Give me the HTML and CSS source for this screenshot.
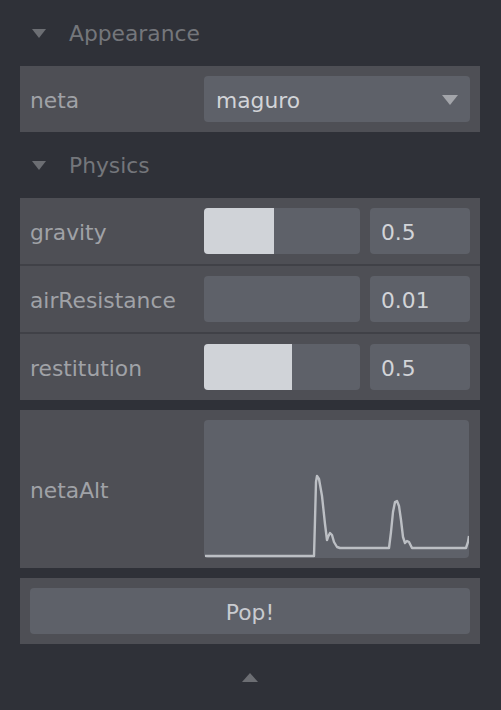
FILE: index.html
```html
<!DOCTYPE html>
<html>
<head>
<meta charset="utf-8">
<link rel="stylesheet" href="styles.css">
</head>
<body>
<div class="pane">
  <div class="folder-title"><span class="tri-down"></span><span>Appearance</span></div>
  <div class="group">
    <div class="row">
      <div class="label">neta</div>
      <div class="value">
        <div class="select"><span>maguro</span><span class="caret"></span></div>
      </div>
    </div>
  </div>

  <div class="folder-title"><span class="tri-down"></span><span>Physics</span></div>
  <div class="group">
    <div class="row">
      <div class="label">gravity</div>
      <div class="value slider-row">
        <div class="slider"><div class="fill" style="width:45%"></div></div>
        <div class="number">0.5</div>
      </div>
    </div>
    <div class="sep"></div>
    <div class="row">
      <div class="label">airResistance</div>
      <div class="value slider-row">
        <div class="slider"><div class="fill" style="width:0%"></div></div>
        <div class="number">0.01</div>
      </div>
    </div>
    <div class="sep"></div>
    <div class="row">
      <div class="label">restitution</div>
      <div class="value slider-row">
        <div class="slider"><div class="fill" style="width:56.5%"></div></div>
        <div class="number">0.5</div>
      </div>
    </div>
  </div>

  <div class="group spaced">
    <div class="row graph-row">
      <div class="label">netaAlt</div>
      <div class="value">
        <div class="graph">
          <svg width="265" height="138" viewBox="0 0 265 138">
            <polyline fill="none" stroke="#bcbfc4" stroke-width="2.4" stroke-linejoin="round"
              points="1,136 110,136 111,100 112,62 113,56 115,59 118,76 121,104 123,120 124,117 126,113 128,115 130,122 133,127 136,128 185,128 187,112 189,92 191,82 193,81 195,86 197,100 199,117 201,123 203,121 205,122 208,128 262,128 264,122 265,116"/>
          </svg>
        </div>
      </div>
    </div>
  </div>

  <div class="group spaced">
    <div class="row">
      <div class="button">Pop!</div>
    </div>
  </div>

  <div class="footer"><span class="tri-up"></span></div>
</div>
</body>
</html>
```

FILE: styles.css
```css
html, body {
  margin: 0;
  padding: 0;
  background: #2f3138;
}
body {
  font-family: "DejaVu Sans", "Liberation Sans", sans-serif;
  font-size: 21.8px;
  width: 501px;
  height: 710px;
  overflow: hidden;
}
.pane {
  width: 460px;
  margin-left: 20px;
  display: flex;
  flex-direction: column;
}
.folder-title {
  height: 66px;
  display: flex;
  align-items: center;
  color: #74767b;
  padding-top: 1px;
  box-sizing: border-box;
}
.tri-down {
  width: 0;
  height: 0;
  border-left: 7.5px solid transparent;
  border-right: 7.5px solid transparent;
  border-top: 9px solid #6c6e73;
  margin-left: 12px;
  margin-right: 23px;
}
.group {
  background: #4e4f55;
  display: flex;
  flex-direction: column;
}
.group.spaced {
  margin-top: 10px;
}
.row {
  display: flex;
  align-items: center;
  padding: 10px;
  height: 46px;
}
.label {
  width: 174px;
  color: #a0a2a7;
  line-height: 46px;
  padding-top: 3px;
  box-sizing: border-box;
}
.value {
  width: 266px;
  display: flex;
}
.select {
  width: 266px;
  height: 46px;
  background: #5e6169;
  border-radius: 4px;
  display: flex;
  align-items: center;
  justify-content: space-between;
  padding: 3px 12px 0 12px;
  box-sizing: border-box;
  color: #d2d4d8;
}
.caret {
  width: 0;
  height: 0;
  border-left: 8px solid transparent;
  border-right: 8px solid transparent;
  border-top: 10px solid #a3a5aa;
  margin-top: -2px;
}
.sep {
  height: 2px;
  background: #404147;
}
.slider-row {
  gap: 10px;
}
.slider {
  width: 156px;
  height: 46px;
  background: #5e6169;
  border-radius: 4px;
  overflow: hidden;
}
.fill {
  height: 100%;
  background: #d0d3d8;
}
.number {
  width: 100px;
  height: 46px;
  background: #5e6169;
  border-radius: 4px;
  color: #d2d4d8;
  padding: 3px 0 0 11px;
  box-sizing: border-box;
  display: flex;
  align-items: center;
}
.graph-row {
  height: 138px;
}
.graph {
  width: 265px;
  height: 138px;
  background: #5e6169;
  border-radius: 4px;
  overflow: hidden;
}
.graph svg {
  display: block;
}
.button {
  width: 440px;
  height: 46px;
  background: #5e6169;
  border-radius: 4px;
  color: #c9cbd0;
  display: flex;
  align-items: center;
  justify-content: center;
  padding-top: 2px;
  box-sizing: border-box;
}
.footer {
  display: flex;
  justify-content: center;
  padding-top: 29px;
  padding-right: 1px;
}
.tri-up {
  width: 0;
  height: 0;
  border-left: 8px solid transparent;
  border-right: 8px solid transparent;
  border-bottom: 9px solid #6c6e73;
}
```
